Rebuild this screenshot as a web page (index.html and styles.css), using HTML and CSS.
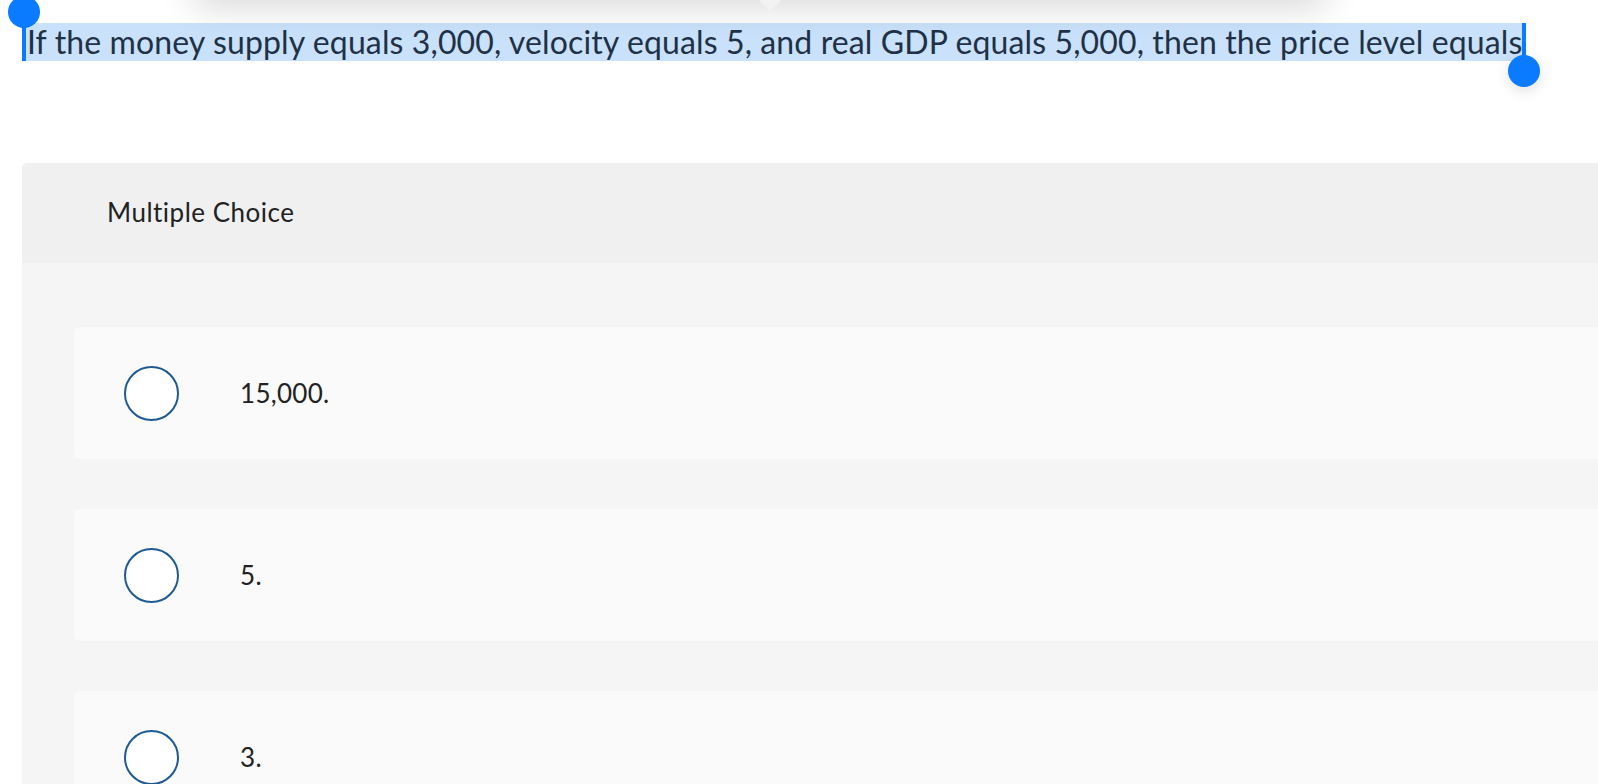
FILE: index.html
```html
<!DOCTYPE html>
<html>
<head>
<meta charset="utf-8">
<link rel="stylesheet" href="styles.css">
</head>
<body>
<div class="popup-shadow"></div>
<div class="popup-arrow"></div>
<div class="question">
  <span class="handle handle-start"></span><span class="sel">If the money supply equals 3,000, velocity equals 5, and real GDP equals 5,000, then the price level equals</span><span class="handle handle-end"></span>
</div>
<div class="panel">
  <div class="panel-head">Multiple Choice</div>
  <div class="panel-body">
    <div class="option"><span class="radio"></span><span class="label">15,000.</span></div>
    <div class="option"><span class="radio"></span><span class="label">5.</span></div>
    <div class="option"><span class="radio"></span><span class="label">3.</span></div>
  </div>
</div>
</body>
</html>
```
FILE: styles.css
```css
html, body {
  margin: 0;
  padding: 0;
  background: #ffffff;
  overflow: hidden;
  height: 784px;
}
body {
  font-family: Lato, "Open Sans", sans-serif;
  position: relative;
}
.popup-shadow {
  position: absolute;
  top: -70px;
  left: 200px;
  width: 1120px;
  height: 70px;
  background: #ffffff;
  box-shadow: 0 0 36px 6px rgba(0, 0, 0, 0.16);
}
.popup-arrow {
  position: absolute;
  top: -8px;
  left: 762px;
  width: 16px;
  height: 16px;
  background: #f2f2f2;
  transform: rotate(45deg);
  border-radius: 2px;
}
.question {
  padding: 23px 0 0 22px;
  font-size: 32px;
  line-height: 38px;
  letter-spacing: 0.12px;
  color: #1e3147;
  white-space: nowrap;
  height: 38px;
}
.sel {
  background: #c9e1fa;
  padding-left: 1px;
  display: inline-block;
  vertical-align: top;
}
.handle {
  position: relative;
  display: inline-block;
  vertical-align: top;
  width: 4px;
  height: 38px;
  background: #0a7bff;
}
.handle::after {
  content: "";
  position: absolute;
  width: 32px;
  height: 32px;
  border-radius: 50%;
  background: #0a7bff;
  left: -14px;
}
.handle-start::after {
  top: -27px;
}
.handle-end::after {
  top: 32px;
  box-shadow: 0 4px 14px rgba(0, 0, 0, 0.12);
}
.panel {
  margin: 102px 0 0 22px;
  width: 1640px;
  border-radius: 5px 0 0 0;
  overflow: hidden;
}
.panel-head {
  background: #f0f0f0;
  height: 100px;
  box-sizing: border-box;
  padding: 34px 0 0 85px;
  font-size: 26px;
  line-height: 30px;
  letter-spacing: 0.5px;
  color: #222222;
}
.panel-body {
  background: #f5f5f5;
  padding: 64px 0 0 52px;
  display: flex;
  flex-direction: column;
  gap: 50px;
  height: 470px;
  overflow: hidden;
}
.option {
  background: #fafafa;
  height: 132px;
  flex: none;
  border-radius: 6px 0 0 6px;
  display: flex;
  align-items: center;
  padding-left: 50px;
}
.radio {
  width: 51px;
  height: 51px;
  border: 2.5px solid #1f5a93;
  border-radius: 50%;
  background: #ffffff;
  flex: none;
}
.label {
  margin-left: 61px;
  font-size: 26px;
  letter-spacing: 0.3px;
  color: #222222;
}
```
